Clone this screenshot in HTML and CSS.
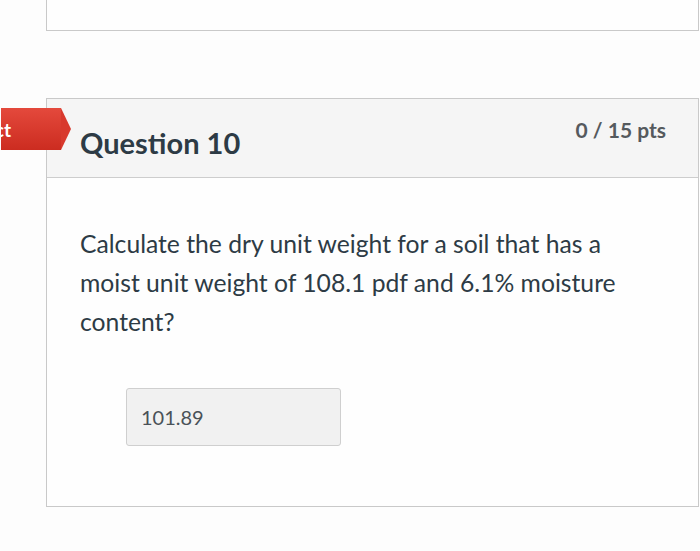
FILE: index.html
```html
<!DOCTYPE html>
<html>
<head>
<meta charset="utf-8">
<link rel="stylesheet" href="styles.css">
</head>
<body>
<div class="page">
  <div class="prev-card"></div>
  <div class="question">
    <div class="tag"><span>Incorrect</span></div>
    <div class="q-header">
      <h2 class="q-title">Question 10</h2>
      <div class="q-pts">0 / 15 pts</div>
    </div>
    <div class="q-body">
      <p class="q-text">Calculate the dry unit weight for a soil that has a moist unit weight of 108.1 pdf and 6.1% moisture content?</p>
      <div class="answer">101.89</div>
    </div>
  </div>
</div>
</body>
</html>
```

FILE: styles.css
```css
html, body {
  margin: 0;
  padding: 0;
  background: #fdfdfd;
  font-family: Lato, "Open Sans", "Liberation Sans", sans-serif;
  overflow: hidden;
}
.page {
  padding-left: 46px;
  padding-right: 1px;
}
.prev-card {
  height: 30px;
  border: 1px solid #c9c9c9;
  border-top: none;
  background: #fefefe;
}
.question {
  position: relative;
  margin-top: 67px;
  border: 1px solid #c9c9c9;
  background: #fefefe;
}
.tag {
  position: absolute;
  left: -46px;
  top: 9px;
  width: 60px;
  height: 42px;
  overflow: hidden;
  background: linear-gradient(#e4493c, #cc2c20);
  color: #fff;
  font-weight: 700;
  font-size: 19px;
  display: flex;
  align-items: center;
  justify-content: flex-end;
}
.tag span {
  white-space: nowrap;
  margin-right: 50px;
}
.question::before {
  content: "";
  position: absolute;
  left: 14px;
  top: 9px;
  width: 0;
  height: 0;
  border-top: 21px solid transparent;
  border-bottom: 21px solid transparent;
  border-left: 10px solid #d8392d;
  z-index: 2;
}
.q-header {
  height: 78px;
  background: #f5f5f5;
  border-bottom: 1px solid #cdcdcd;
  display: flex;
  justify-content: space-between;
  align-items: flex-start;
  padding: 0 32px 0 33px;
}
.q-title {
  margin: 26px 0 0;
  font-size: 29px;
  font-weight: 700;
  color: #2d3b45;
}
.q-pts {
  margin-top: 18px;
  font-size: 21px;
  font-weight: 700;
  color: #555a5e;
}
.q-body {
  padding: 46px 33px 60px;
}
.q-text {
  margin: 0;
  font-size: 24.7px;
  line-height: 39px;
  color: #2d3b45;
  max-width: 545px;
}
.answer {
  margin: 47px 0 0 46px;
  width: 199px;
  height: 56px;
  padding-left: 14px;
  box-sizing: content-box;
  border: 1px solid #cfcfcf;
  border-radius: 3px;
  background: #f1f1f1;
  font-size: 20px;
  color: #4a5258;
  display: flex;
  align-items: center;
}
```
